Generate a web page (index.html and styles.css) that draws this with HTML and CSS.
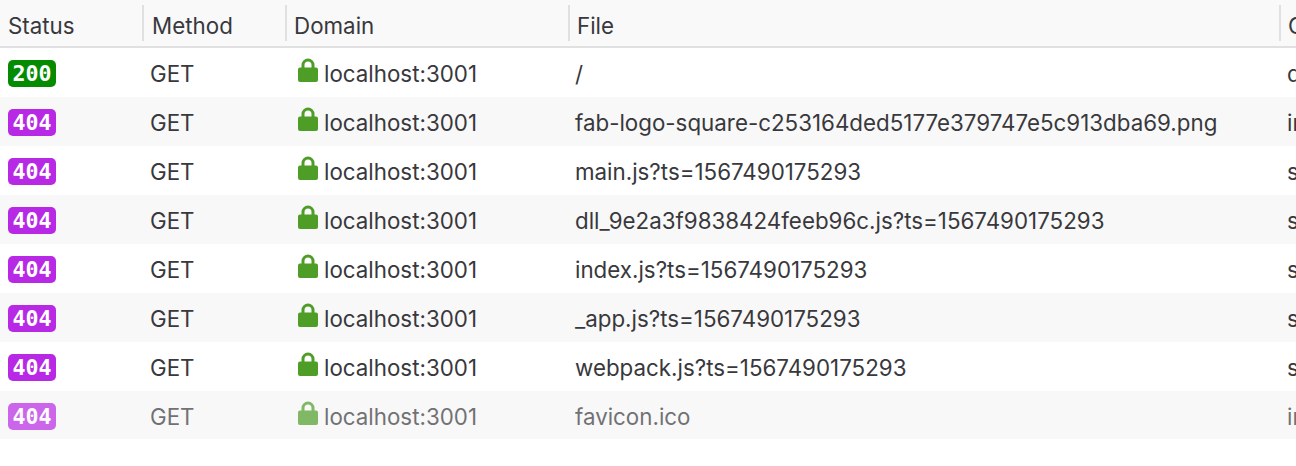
FILE: index.html
```html
<!DOCTYPE html>
<html>
<head>
<meta charset="utf-8">
<link rel="stylesheet" href="styles.css">
<title>Network</title>
</head>
<body>
<svg class="defs" width="0" height="0"><symbol id="lock" viewBox="0 0 20 24"><path fill="currentColor" d="M3.500 9.500V7a6.500 6.500 0 0 1 13 0v2.500H18a2 2 0 0 1 2 2V22a2 2 0 0 1-2 2H2a2 2 0 0 1-2-2V11.500a2 2 0 0 1 2-2zM6.500 9.500h7V7a3.500 3.500 0 0 0-7 0z"/></symbol></svg>
<div class="table">
  <div class="row head">
    <div class="c status">Status</div><div class="c method">Method</div><div class="c domain">Domain</div><div class="c file">File</div><div class="c cause">Cause</div>
  </div>
  <div class="row"><div class="c status"><span class="badge ok">200</span></div><div class="c method">GET</div><div class="c domain"><svg class="lock"><use href="#lock"/></svg>localhost:3001</div><div class="c file">/</div><div class="c cause">document</div></div>
  <div class="row"><div class="c status"><span class="badge">404</span></div><div class="c method">GET</div><div class="c domain"><svg class="lock"><use href="#lock"/></svg>localhost:3001</div><div class="c file">fab-logo-square-c253164ded5177e379747e5c913dba69.png</div><div class="c cause">img</div></div>
  <div class="row"><div class="c status"><span class="badge">404</span></div><div class="c method">GET</div><div class="c domain"><svg class="lock"><use href="#lock"/></svg>localhost:3001</div><div class="c file">main.js?ts=1567490175293</div><div class="c cause">script</div></div>
  <div class="row"><div class="c status"><span class="badge">404</span></div><div class="c method">GET</div><div class="c domain"><svg class="lock"><use href="#lock"/></svg>localhost:3001</div><div class="c file">dll_9e2a3f9838424feeb96c.js?ts=1567490175293</div><div class="c cause">script</div></div>
  <div class="row"><div class="c status"><span class="badge">404</span></div><div class="c method">GET</div><div class="c domain"><svg class="lock"><use href="#lock"/></svg>localhost:3001</div><div class="c file">index.js?ts=1567490175293</div><div class="c cause">script</div></div>
  <div class="row"><div class="c status"><span class="badge">404</span></div><div class="c method">GET</div><div class="c domain"><svg class="lock"><use href="#lock"/></svg>localhost:3001</div><div class="c file">_app.js?ts=1567490175293</div><div class="c cause">script</div></div>
  <div class="row"><div class="c status"><span class="badge">404</span></div><div class="c method">GET</div><div class="c domain"><svg class="lock"><use href="#lock"/></svg>localhost:3001</div><div class="c file">webpack.js?ts=1567490175293</div><div class="c cause">script</div></div>
  <div class="row faded"><div class="c status"><span class="badge">404</span></div><div class="c method">GET</div><div class="c domain"><svg class="lock"><use href="#lock"/></svg>localhost:3001</div><div class="c file">favicon.ico</div><div class="c cause">img</div></div>
</div>
</body>
</html>
```
FILE: styles.css
```css
html, body {
  margin: 0;
  padding: 0;
  height: 466px;
  overflow: hidden;
  background: #fff;
}
.defs { display: block; height: 0; }
.table {
  width: 1296px;
  overflow: hidden;
  font-family: Inter, "Liberation Sans", sans-serif;
  font-size: 22.35px;
  color: #38383d;
}
.row {
  display: grid;
  grid-template-columns: 142px 143px 283px 711px 17px;
  height: 49px;
  align-items: center;
  white-space: nowrap;
}
.row:nth-child(odd) { background: #f8f8f8; }
.row:last-child { height: 48px; }
.row.head {
  height: 46px;
  background: #f9f9fa;
  border-bottom: 2px solid #e0e0e1;
}
.c {
  overflow: hidden;
  height: 100%;
  box-sizing: border-box;
  padding-top: 1px;
  display: flex;
  align-items: center;
}
.row:last-child .c { padding-top: 2px; }
.method { padding-left: 8px; }
.domain { padding-left: 13px; }
.file { padding-left: 7px; }
.cause { padding-left: 8px; }
.head .c {
  height: 36px;
  align-self: center;
  border-left: 2px solid #e0e0e1;
  padding: 5px 0 0 7px;
}
.head .status { border-left: 0; padding-left: 8px; }
.head .method { padding-left: 8px; }
.badge {
  width: 48px;
  height: 27px;
  margin-left: 8px;
  border-radius: 5px;
  background: #b829e6;
  color: #fff;
  font-family: "DejaVu Sans Mono", "Liberation Mono", monospace;
  font-weight: 700;
  font-size: 21.600px;
  display: flex;
  align-items: center;
  justify-content: center;
}
.badge.ok { background: #058b00; }
.lock {
  width: 20px;
  height: 24px;
  margin-right: 6px;
  margin-top: -6px;
  color: #4e9d27;
  flex: none;
}
.faded .c { opacity: 0.7; }
```
